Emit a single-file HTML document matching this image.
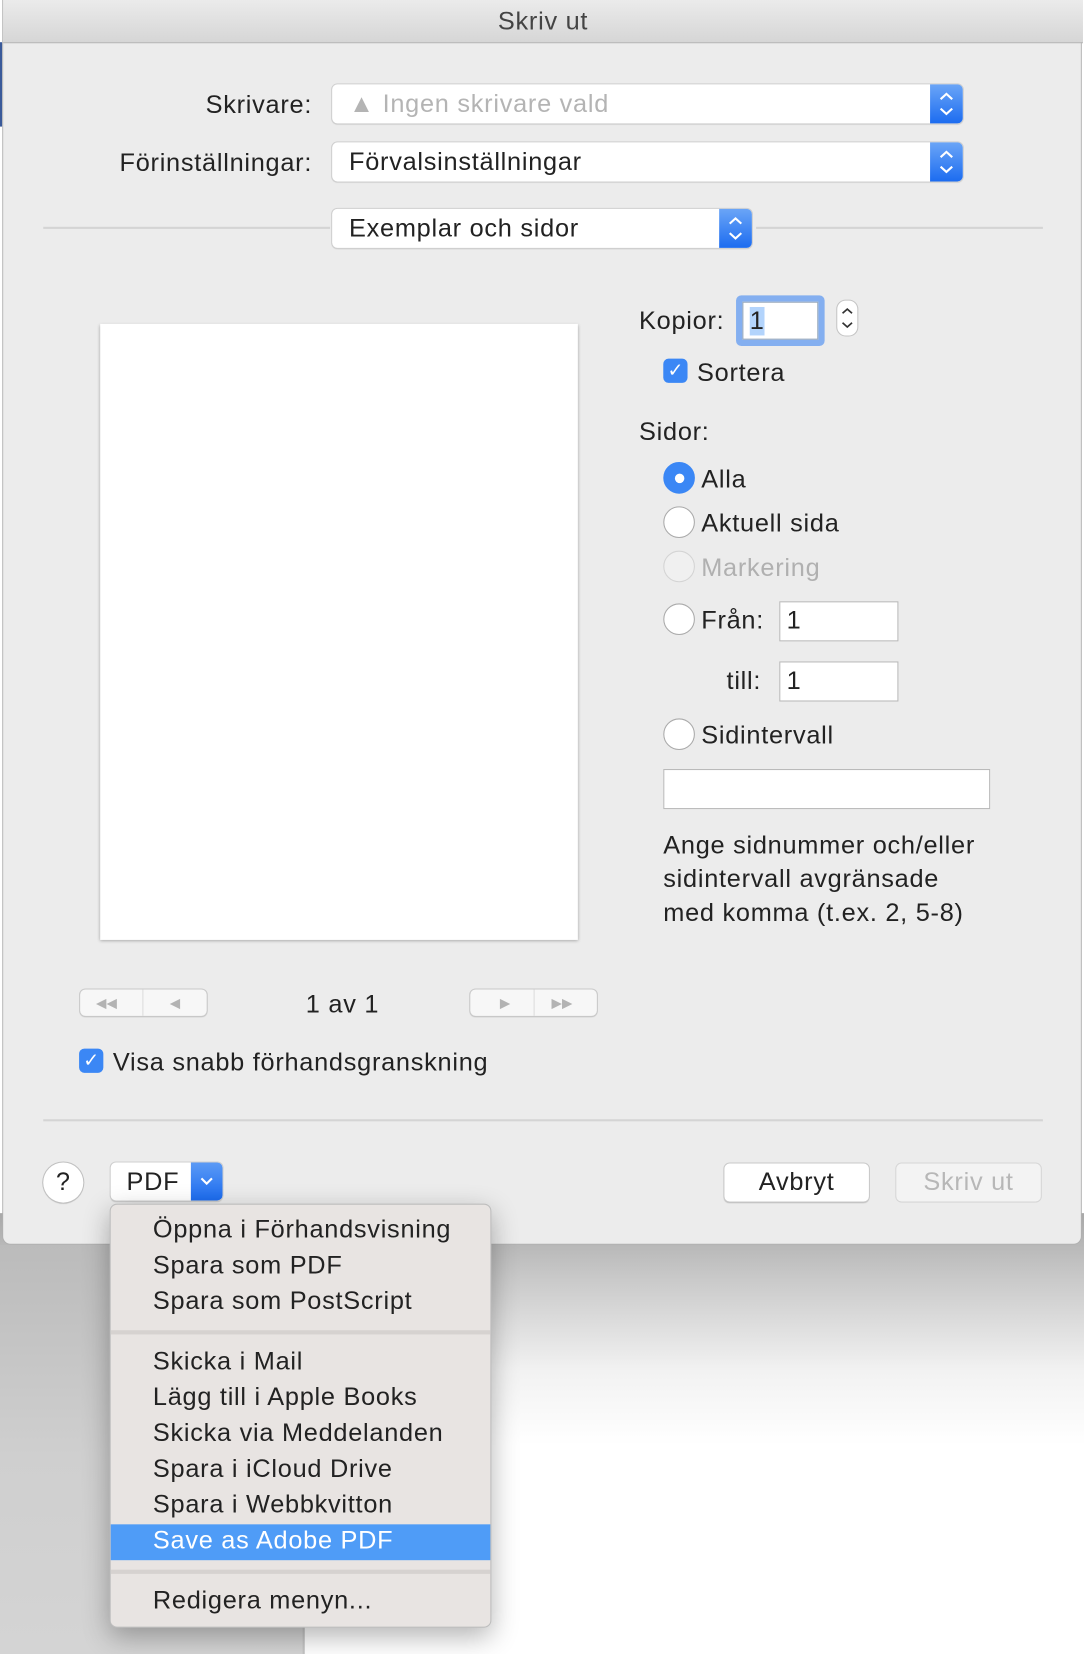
<!DOCTYPE html>
<html><head><meta charset="utf-8"><style>
*{margin:0;padding:0;box-sizing:border-box}
html,body{width:1084px;height:1654px;overflow:hidden;background:#fff}
#w{position:absolute;left:0;top:0;width:1028px;height:1568px;transform:scale(1.0545,1.0549);transform-origin:0 0;font-family:"Liberation Sans",sans-serif;color:#222;letter-spacing:.7px}
.a{position:absolute;white-space:nowrap}
.t{font-size:24px}
.bg{position:absolute;left:0;top:1150px;width:1028px;height:418px;background:linear-gradient(#a8a8a8 0px,#c8c8c8 60px,#f2f2f2 150px,#fff 220px)}
.win{position:absolute;left:2px;top:0;width:1024px;height:1180px;background:#ececec;border-radius:0 0 8px 8px;border:1px solid #b0b0b0;border-top:none}
.title{position:absolute;left:0;top:0;width:1024px;height:41px;background:linear-gradient(#ebebeb,#d6d6d6);border-bottom:1px solid #b4b4b4;text-align:center;font-size:24px;line-height:42px;color:#444}
.pop{position:absolute;background:#fff;border-radius:5px;box-shadow:0 0 0 1px #cfcfcf,0 1px 1px #b8b8b8}
.pop .arr{position:absolute;right:0;top:0;bottom:0;width:31px;background:linear-gradient(#6aa5f7,#1c6cf0);border-radius:0 5px 5px 0}
.pop .txt{position:absolute;left:16px;top:0;font-size:24px;line-height:37px;white-space:nowrap}
.line{position:absolute;height:2px;background:#d4d4d4}
.field{position:absolute;background:#fff;border:1px solid #b9b9b9;font-size:24px;line-height:36px;padding-left:6px}
.radio{position:absolute;width:30px;height:30px;border-radius:50%;background:#fff;border:1px solid #aaa}
.cb{position:absolute;width:23px;height:23px;border-radius:5px;background:#3b87f5;color:#fff;font-size:18px;line-height:23px;text-align:center;letter-spacing:0}
.btn{position:absolute;background:#fff;border-radius:5px;box-shadow:0 0 0 1px #c9c9c9,0 1px 1px #aaa;text-align:center;font-size:24px;line-height:36px}
.menu{position:absolute;left:104px;top:1141px;width:362px;height:402px;background:#e8e4e2;border-radius:7px;border:1px solid #bdbdbd;box-shadow:0 8px 25px rgba(0,0,0,.3)}
.mi{position:absolute;left:40px;font-size:24px;white-space:nowrap}
</style></head><body><div id="w">
<div class="bg"></div>
<div style="position:absolute;left:0;top:1180px;width:288px;height:388px;background:linear-gradient(#bbb,#cfcfcf 200px,#d4d4d4)"></div>
<div style="position:absolute;left:287px;top:1540px;width:2px;height:28px;background:#c4c4c4"></div>
<div style="position:absolute;left:0;top:40px;width:2px;height:80px;background:#3a5a9a"></div>
<div class="win">
<div class="title">Skriv ut</div>
<div class="a t" style="right:729px;top:86px">Skrivare:</div>
<div class="pop" style="left:312px;top:80px;width:598px;height:37px"><div class="txt" style="color:#b4b4b4">▲ Ingen skrivare vald</div><div class="arr"><svg width="31" height="37"><path d="M10 14l5.5-5 5.5 5M10 23l5.5 5 5.5-5" stroke="#fff" stroke-width="2" fill="none"/></svg></div></div>
<div class="a t" style="right:729px;top:141px">Förinställningar:</div>
<div class="pop" style="left:312px;top:135px;width:598px;height:37px"><div class="txt">Förvalsinställningar</div><div class="arr"><svg width="31" height="37"><path d="M10 14l5.5-5 5.5 5M10 23l5.5 5 5.5-5" stroke="#fff" stroke-width="2" fill="none"/></svg></div></div>
<div class="line" style="left:38px;top:215px;width:272px"></div>
<div class="line" style="left:714px;top:215px;width:272px"></div>
<div class="pop" style="left:312px;top:198px;width:398px;height:37px"><div class="txt">Exemplar och sidor</div><div class="arr"><svg width="31" height="37"><path d="M10 14l5.5-5 5.5 5M10 23l5.5 5 5.5-5" stroke="#fff" stroke-width="2" fill="none"/></svg></div></div>
<div style="position:absolute;left:92px;top:307px;width:453px;height:584px;background:#fff;box-shadow:0 1px 3px rgba(0,0,0,.3)"></div>
<div class="btn" style="left:73px;top:938px;width:120px;height:25px;background:#f7f7f7;color:#b3b3b3;font-size:13px;line-height:25px;letter-spacing:0"><span style="position:absolute;left:15px">◀◀</span><span style="position:absolute;left:59px;top:0;width:1px;height:25px;background:#ddd"></span><span style="position:absolute;left:85px">◀</span></div>
<div class="a t" style="left:287px;top:939px">1 av 1</div>
<div class="btn" style="left:443px;top:938px;width:120px;height:25px;background:#f7f7f7;color:#b3b3b3;font-size:13px;line-height:25px;letter-spacing:0"><span style="position:absolute;left:28px">▶</span><span style="position:absolute;left:60px;top:0;width:1px;height:25px;background:#ddd"></span><span style="position:absolute;left:77px">▶▶</span></div>
<div class="cb" style="left:72px;top:994px">✓</div>
<div class="a t" style="left:104px;top:994px">Visa snabb förhandsgranskning</div>
<div class="a t" style="left:603px;top:291px">Kopior:</div>
<div style="position:absolute;left:695px;top:280px;width:84px;height:48px;border-radius:5px;background:#84aff0"></div>
<div class="field" style="left:701px;top:286px;width:72px;height:36px;border-color:#9ab"><span style="background:#b3d4fc">1</span></div>
<div style="position:absolute;left:791px;top:285px;width:19px;height:33px;background:#fff;border-radius:8px;box-shadow:0 0 0 1px #c5c5c5"><svg width="19" height="33"><path d="M5 12l4.5-4 4.5 4M5 21l4.5 4 4.5-4" stroke="#333" stroke-width="1.6" fill="none"/></svg></div>
<div class="cb" style="left:626px;top:340px">✓</div>
<div class="a t" style="left:658px;top:340px">Sortera</div>
<div class="a t" style="left:603px;top:396px">Sidor:</div>
<div class="radio" style="left:626px;top:438px;background:#3b87f5;border-color:#3b87f5"><div style="position:absolute;left:10px;top:10px;width:9px;height:9px;border-radius:50%;background:#fff"></div></div>
<div class="a t" style="left:662px;top:441px">Alla</div>
<div class="radio" style="left:626px;top:480px"></div>
<div class="a t" style="left:662px;top:483px">Aktuell sida</div>
<div class="radio" style="left:626px;top:522px;background:#f0f0f0;border-color:#d4d4d4"></div>
<div class="a t" style="left:662px;top:525px;color:#b0b0b0">Markering</div>
<div class="radio" style="left:626px;top:572px"></div>
<div class="a t" style="left:662px;top:575px">Från:</div>
<div class="field" style="left:736px;top:570px;width:113px;height:38px">1</div>
<div class="a t" style="left:686px;top:632px">till:</div>
<div class="field" style="left:736px;top:627px;width:113px;height:38px">1</div>
<div class="radio" style="left:626px;top:681px"></div>
<div class="a t" style="left:662px;top:684px">Sidintervall</div>
<div class="field" style="left:626px;top:729px;width:310px;height:38px"></div>
<div class="a t" style="left:626px;top:786px;line-height:32px">Ange sidnummer och/eller<br>sidintervall avgränsade<br>med komma (t.ex. 2, 5-8)</div>
<div class="line" style="left:38px;top:1061px;width:948px"></div>
<div style="position:absolute;left:38px;top:1102px;width:38px;height:38px;border-radius:50%;background:#fff;box-shadow:0 0 0 1px #c0c0c0,0 1px 1px #aaa;text-align:center;font-size:24px;line-height:38px">?</div>
<div class="pop" style="left:102px;top:1102px;width:106px;height:36px"><div class="txt" style="left:15px;line-height:37px">PDF</div><div class="arr" style="width:30px;background:linear-gradient(#5b9af5,#1c6cf0)"><svg width="30" height="36"><path d="M10 15l5 5 5-5" stroke="#fff" stroke-width="2" fill="none"/></svg></div></div>
<div class="btn" style="left:684px;top:1103px;width:137px;height:36px">Avbryt</div>
<div class="btn" style="left:847px;top:1103px;width:137px;height:36px;background:#f3f3f3;color:#b7b7b7;box-shadow:0 0 0 1px #d6d6d6">Skriv ut</div>
</div>
<div class="menu">
<div class="mi" style="top:10px">Öppna i Förhandsvisning</div>
<div class="mi" style="top:44px">Spara som PDF</div>
<div class="mi" style="top:78px">Spara som PostScript</div>
<div style="position:absolute;left:0;top:119px;width:360px;height:4px;background:#d6d2d0"></div>
<div class="mi" style="top:135px">Skicka i Mail</div>
<div class="mi" style="top:169px">Lägg till i Apple Books</div>
<div class="mi" style="top:203px">Skicka via Meddelanden</div>
<div class="mi" style="top:237px">Spara i iCloud Drive</div>
<div class="mi" style="top:271px">Spara i Webbkvitton</div>
<div style="position:absolute;left:0;top:303px;width:360px;height:34px;background:#4f9cf7"></div>
<div class="mi" style="top:305px;color:#fff">Save as Adobe PDF</div>
<div style="position:absolute;left:0;top:346px;width:360px;height:4px;background:#d6d2d0"></div>
<div class="mi" style="top:362px">Redigera menyn...</div>
</div>
</div></body></html>
